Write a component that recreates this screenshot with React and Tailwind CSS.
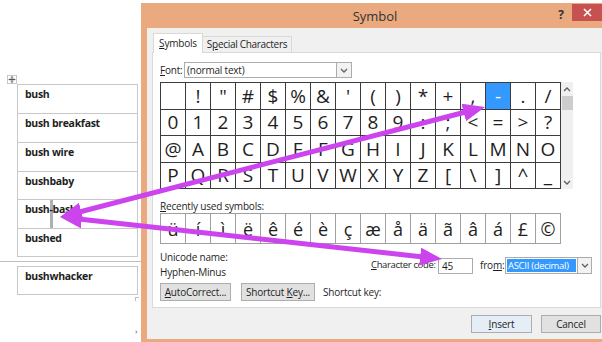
import React from 'react';

const gridRows = [
  [' ', '!', '"', '#', '$', '%', '&', "'", '(', ')', '*', '+', ',', '-', '.', '/'],
  ['0', '1', '2', '3', '4', '5', '6', '7', '8', '9', ':', ';', '<', '=', '>', '?'],
  ['@', 'A', 'B', 'C', 'D', 'E', 'F', 'G', 'H', 'I', 'J', 'K', 'L', 'M', 'N', 'O'],
  ['P', 'Q', 'R', 'S', 'T', 'U', 'V', 'W', 'X', 'Y', 'Z', '[', '\\', ']', '^', '_'],
];
const rowHeights = ['h-[27px]', 'h-[26px]', 'h-[27px]', 'h-[26px]'];
const recent = ['ü', 'í', 'ì', 'ë', 'ê', 'é', 'è', 'ç', 'æ', 'å', 'ä', 'ã', 'â', 'á', '£', '©'];

const words = [
  { text: 'bush', h: 'h-[29px]' },
  { text: 'bush breakfast', h: 'h-[29px]' },
  { text: 'bush wire', h: 'h-[29px]' },
  { text: 'bushbaby', h: 'h-[28px]' },
  { text: 'bush-bash', h: 'h-[29px]', caret: true },
  { text: 'bushed', h: 'h-[28px]' },
];

const Chevron = ({ up }) => (
  <svg width="8" height="5" viewBox="0 0 8 5">
    <path d={up ? 'M1 4 L4 1 L7 4' : 'M1 1 L4 4 L7 1'} fill="none" stroke="#606060" strokeWidth="1.3" />
  </svg>
);

const Btn = ({ children, className = '' }) => (
  <div className={`flex items-center justify-center h-[18px] border border-[#adadad] bg-[#e1e1e1] text-[10px] tracking-[-0.2px] text-[#1e1e1e] ${className}`}>
    {children}
  </div>
);

const App = () => {
  return (
    <div className="relative w-[602px] h-[342px] overflow-hidden bg-white flex items-start whitespace-nowrap font-['Open_Sans',sans-serif] text-[#1e1e1e]">
      {/* word document behind the dialog */}
      <div className="w-[141px] shrink-0 pt-[75px] flex flex-col">
        <svg className="ml-[7px]" width="10" height="9" viewBox="0 0 10 9">
          <rect x="0.5" y="0.5" width="9" height="8" fill="#fff" stroke="#c8c8c8" />
          <path d="M5 1.5 V7.5 M2 4.5 H8" stroke="#555" strokeWidth="1" />
          <path d="M4 2.5 L5 1.5 L6 2.5 M4 6.5 L5 7.5 L6 6.5 M3 3.5 L2 4.5 L3 5.5 M7 3.5 L8 4.5 L7 5.5" fill="none" stroke="#555" strokeWidth="0.8" />
        </svg>
        <div className="ml-[17px] w-[121px] border-l border-t border-[#c8c8c8]">
          {words.map((w) => (
            <div key={w.text} className={`relative ${w.h} border-r border-b border-[#c8c8c8] pl-[7px] pt-[1px] text-[10.5px] leading-[16px] tracking-[-0.3px] font-bold`}>
              {w.caret && <div className="absolute left-[32px] top-0 bottom-0 w-[3px] bg-[#b0b0b0]" />}
              <span className="relative">{w.text}</span>
            </div>
          ))}
        </div>
        <div className="mt-[4px] h-px w-full bg-[#c0c0c0]" />
        <div className="mt-[4px] ml-[17px] w-[121px] h-[29px] border border-[#c8c8c8] pl-[7px] pt-[1px] text-[10.5px] leading-[16px] tracking-[-0.3px] font-bold">
          bushwhacker
        </div>
        <div className="ml-[135px] mt-[2px] w-[4px] h-[4px] border-t border-l border-[#bbb]" />
        <div className="ml-[135px] mt-[26px] text-[8px] leading-[8px] text-[#444]">›</div>
      </div>

      {/* Symbol dialog */}
      <div className="mt-[3px] w-[468px] h-[339px] shrink-0 bg-[#eba97f] flex flex-col">
        <div className="h-[25px] flex items-start">
          <div className="flex-1" />
          <div className="pt-[4px] text-[13px] leading-[18px] text-[#333]">Symbol</div>
          <div className="flex-1 flex justify-end items-start">
            <div className="mt-[4px] mr-[8px] text-[12px] leading-[16px] font-bold text-[#333]">?</div>
            <div className="mt-[1px] w-[37px] h-[17px] bg-[#c75050] flex items-center justify-center pr-[6px]">
              <svg width="9" height="9" viewBox="0 0 9 9">
                <path d="M1 1 L8 8 M8 1 L1 8" stroke="#fff" strokeWidth="1.6" />
              </svg>
            </div>
          </div>
        </div>

        <div className="mx-[6px] mb-[3px] flex-1 bg-[#f0f0f0] flex flex-col">
          {/* tabs */}
          <div className="pt-[5px] pl-[6px] flex items-end">
            <div className="relative z-10 -mb-px h-[20px] w-[50px] bg-white border-l border-t border-r border-[#d9d9d9] flex items-center justify-center text-[10px] tracking-[-0.2px]">
              <span><u>S</u>ymbols</span>
            </div>
            <div className="h-[16px] w-[89px] bg-[#f0f0f0] border-t border-r border-[#d9d9d9] flex items-center justify-center text-[10px] tracking-[-0.3px]">
              <span>S<u>p</u>ecial Characters</span>
            </div>
          </div>

          {/* pane */}
          <div className="ml-[5px] w-[449px] h-[256px] border border-[#d9d9d9] bg-white pl-[7px] pt-[9px] flex flex-col text-[10px] tracking-[-0.2px]">
            <div className="h-[16px] flex items-center">
              <div className="w-[24px]"><u>F</u>ont:</div>
              <div className="w-[168px] h-[16px] border border-[#acacac] flex items-stretch">
                <div className="flex-1 pl-[2px] leading-[14px]">(normal text)</div>
                <div className="w-[15px] border-l border-[#acacac] bg-[#f2f2f2] flex items-center justify-center">
                  <Chevron />
                </div>
              </div>
            </div>

            <div className="mt-[4px] flex items-stretch tracking-normal">
              <div className="border-l border-t border-[#3c3c3c]">
                {gridRows.map((row, ri) => (
                  <div key={ri} className={`flex ${rowHeights[ri]}`}>
                    {row.map((ch, ci) => {
                      const sel = ch === '-';
                      return (
                        <div
                          key={ci}
                          className={`w-[25px] border-r border-b border-[#3c3c3c] flex items-center justify-center text-[19px] leading-none ${sel ? 'bg-[#3399ff] text-white' : ''}`}
                        >
                          {ch}
                        </div>
                      );
                    })}
                  </div>
                ))}
              </div>
              <div className="w-[12px] bg-[#f0f0f0] flex flex-col items-center">
                <div className="h-[14px] flex items-center"><Chevron up /></div>
                <div className="w-[11px] h-[14px] bg-[#cdcdcd]" />
                <div className="flex-1" />
                <div className="h-[14px] flex items-center"><Chevron /></div>
              </div>
            </div>

            <div className="mt-[10px] h-[14px] leading-[14px]"><u>R</u>ecently used symbols:</div>
            <div className="flex border-l border-t border-[#a0a0a0] w-max tracking-normal">
              {recent.map((ch, i) => (
                <div key={i} className="w-[25px] h-[30px] border-r border-b border-[#a0a0a0] flex items-center justify-center text-[18px] leading-none">
                  {ch}
                </div>
              ))}
            </div>

            <div className="mt-[6px] flex items-start">
              <div className="w-[211px] leading-[15px]">
                <div>Unicode name:</div>
                <div>Hyphen-Minus</div>
              </div>
              <div className="mt-[7px] flex items-center">
                <div className="w-[67px] text-[9.5px] tracking-[-0.35px]"><u>C</u>haracter code:</div>
                <div className="w-[35px] h-[16px] border border-[#acacac] pl-[3px] leading-[14px]">45</div>
                <div className="ml-[7px] w-[25px]">fro<u>m</u>:</div>
                <div className="w-[87px] h-[17px] border border-[#acacac] flex items-stretch">
                  <div className="flex-1 p-[1px] flex overflow-hidden">
                    <div className="bg-[#3399ff] text-white leading-[13px] px-[1px] flex-1 text-[9.5px] tracking-[-0.3px]">ASCII (decimal)</div>
                  </div>
                  <div className="w-[14px] border-l border-[#acacac] bg-[#f2f2f2] flex items-center justify-center">
                    <Chevron />
                  </div>
                </div>
              </div>
            </div>

            <div className="mt-[3px] flex items-center">
              <Btn className="w-[71px]"><span><u>A</u>utoCorrect...</span></Btn>
              <Btn className="ml-[10px] w-[74px]"><span>Shortcut <u>K</u>ey...</span></Btn>
              <div className="ml-[8px]">Shortcut key:</div>
            </div>
          </div>

          {/* footer buttons */}
          <div className="mt-[7px] flex">
            <Btn className="ml-[324px] w-[61px] border-[#5a9bd5] bg-[#e5eef7]"><span><u>I</u>nsert</span></Btn>
            <Btn className="ml-[9px] w-[60px]">Cancel</Btn>
          </div>
        </div>
      </div>

      {/* callout arrows */}
      <svg className="absolute inset-0 pointer-events-none" width="602" height="342" viewBox="0 0 602 342">
        <defs>
          <marker id="head" viewBox="0 0 22 18" refX="10" refY="9" markerWidth="22" markerHeight="18" markerUnits="userSpaceOnUse" orient="auto-start-reverse">
            <path d="M0 0 L22 9 L0 18 Z" fill="#cc44ee" />
          </marker>
        </defs>
        <path d="M473.4 110 L71.6 214" stroke="#cc44ee" strokeWidth="5" markerStart="url(#head)" markerEnd="url(#head)" />
        <path d="M71.9 218.3 L430.1 257.7" stroke="#cc44ee" strokeWidth="5" markerStart="url(#head)" markerEnd="url(#head)" />
      </svg>
    </div>
  );
};

export default App;
